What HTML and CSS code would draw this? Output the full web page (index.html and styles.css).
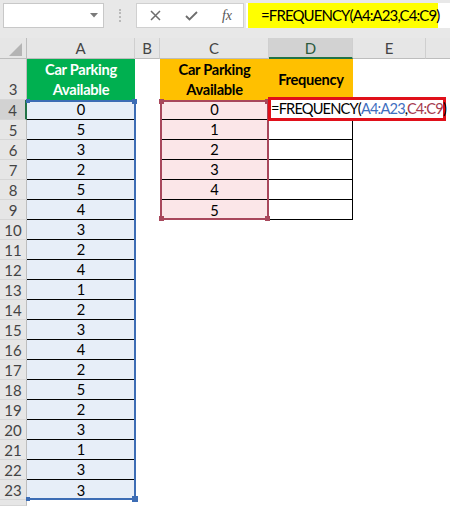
FILE: index.html
```html
<!DOCTYPE html>
<html>
<head>
<meta charset="utf-8">
<link rel="stylesheet" href="styles.css">
</head>
<body>
<div class="toolbar">
  <div class="namebox"><svg width="8" height="5" viewBox="0 0 8 5"><polygon points="0,0 8,0 4,4.5" fill="#7a7a7a"/></svg></div>
  <div class="grip"><i></i></div>
  <div class="fbtns">
    <span><svg width="11" height="11" viewBox="0 0 11 11"><path d="M1 1 L10 10 M10 1 L1 10" stroke="#6d6d6d" stroke-width="1.5" fill="none"/></svg></span>
    <span><svg width="13" height="10" viewBox="0 0 13 10"><polyline points="1,5 4.5,8.5 12,1" stroke="#6d6d6d" stroke-width="1.8" fill="none"/></svg></span>
    <span class="fx">fx</span>
  </div>
  <div class="fbar"><div class="hl">=FREQUENCY(A4:A23,C4:C9)</div></div>
</div>

<div class="sheet">
  <div class="corner"><svg width="14" height="14" viewBox="0 0 14 14"><polygon points="13,0 13,13 0,13" fill="#b4b4b4"/></svg></div>
  <div class="ch">A</div>
  <div class="ch">B</div>
  <div class="ch">C</div>
  <div class="ch sel">D</div>
  <div class="ch">E</div>
  <div class="ch last"></div>

  <div class="rh tall">3</div>
  <div class="c head green ca3">Car Parking<br>Available</div>
  <div class="c head gold cc3">Car Parking<br>Available</div>
  <div class="c head gold cd3">Frequency</div>

  <div class="rh sel">4</div><div class="c ca">0</div><div class="c cc">0</div><div class="c cd"></div>
  <div class="rh">5</div><div class="c ca">5</div><div class="c cc">1</div><div class="c cd"></div>
  <div class="rh">6</div><div class="c ca">3</div><div class="c cc">2</div><div class="c cd"></div>
  <div class="rh">7</div><div class="c ca">2</div><div class="c cc">3</div><div class="c cd"></div>
  <div class="rh">8</div><div class="c ca">5</div><div class="c cc">4</div><div class="c cd"></div>
  <div class="rh">9</div><div class="c ca">4</div><div class="c cc end">5</div><div class="c cd"></div>
  <div class="rh">10</div><div class="c ca">3</div>
  <div class="rh">11</div><div class="c ca">2</div>
  <div class="rh">12</div><div class="c ca">4</div>
  <div class="rh">13</div><div class="c ca">1</div>
  <div class="rh">14</div><div class="c ca">2</div>
  <div class="rh">15</div><div class="c ca">3</div>
  <div class="rh">16</div><div class="c ca">4</div>
  <div class="rh">17</div><div class="c ca">2</div>
  <div class="rh">18</div><div class="c ca">5</div>
  <div class="rh">19</div><div class="c ca">2</div>
  <div class="rh">20</div><div class="c ca">3</div>
  <div class="rh">21</div><div class="c ca">1</div>
  <div class="rh">22</div><div class="c ca">3</div>
  <div class="rh">23</div><div class="c ca end">3</div>
  <div class="rh"></div>

  <div class="range-a">
    <span class="h tl"></span><span class="h tr"></span><span class="h bl"></span><span class="h br"></span>
  </div>
  <div class="range-c">
    <span class="h tl"></span><span class="h tr"></span><span class="h bl"></span><span class="h br"></span>
  </div>
  <div class="editor">=FREQUENCY(<span class="ref-a">A4:A23</span>,<span class="ref-c">C4:C9</span>)</div>
</div>
</body>
</html>
```

FILE: styles.css
```css
* { box-sizing: border-box; }
html, body { margin: 0; padding: 0; }
body {
  width: 450px;
  height: 506px;
  overflow: hidden;
  background: #fff;
  font-family: Lato, "Liberation Sans", sans-serif;
  font-size: 14.67px;
  color: #000;
}

/* formula toolbar */
.toolbar {
  height: 38px;
  background: #e8e8e8;
  display: flex;
  align-items: flex-start;
  padding-top: 3px;
}
.namebox {
  margin-left: 3px;
  width: 101px;
  height: 25px;
  background: #fff;
  border: 1px solid #c8c8c8;
  display: flex;
  align-items: center;
  justify-content: flex-end;
  padding-right: 5px;
}
.grip {
  width: 32px;
  height: 25px;
  display: flex;
  align-items: center;
  justify-content: center;
}
.grip i {
  display: block;
  height: 13px;
  border-left: 2px dotted #b9b9b9;
}
.fbtns {
  width: 108px;
  height: 25px;
  background: #fff;
  border: 1px solid #d0d0d0;
  display: grid;
  grid-template-columns: 36px 36px 36px;
}
.fbtns span {
  display: flex;
  align-items: center;
  justify-content: center;
}
.fx {
  font-family: "Liberation Serif", serif;
  font-style: italic;
  font-size: 14px;
  color: #555;
}
.fbar {
  flex: 1;
  margin-left: 2px;
  height: 25px;
  background: #fff;
}
.hl {
  width: 190px;
  height: 25px;
  margin-left: 2px;
  background: #ffff00;
  padding-left: 13px;
  line-height: 25px;
  font-size: 15px;
  letter-spacing: -0.9px;
  white-space: nowrap;
}

/* sheet */
.sheet {
  position: relative;
  display: grid;
  grid-template-columns: 27px 108px 25px 109px 84px 73px 1fr;
  grid-template-rows: 21px 41px repeat(20, 20px) 6px;
}
.corner {
  grid-column: 1;
  background: #e6e6e6;
  border-right: 1px solid #bdbdbd;
  border-bottom: 1px solid #bdbdbd;
  display: flex;
  justify-content: flex-end;
  align-items: flex-end;
  padding: 0 3px 1px 0;
}
.ch {
  background: #e6e6e6;
  border-right: 1px solid #cfcfcf;
  border-bottom: 1px solid #bdbdbd;
  display: flex;
  align-items: center;
  justify-content: center;
  color: #444;
  font-size: 15px;
}
.ch.last { border-right: none; }
.ch.sel {
  background: #d2d2d2;
  border-bottom: 2px solid #217346;
  color: #2b5a3c;
}
.rh {
  grid-column: 1;
  background: #e6e6e6;
  border-right: 1px solid #bdbdbd;
  border-bottom: 1px solid #d6d6d6;
  display: flex;
  align-items: center;
  justify-content: center;
  color: #444;
  font-size: 15px;
}
.rh.tall { align-items: flex-end; padding-bottom: 1px; }
.rh.sel {
  background: #d2d2d2;
  border-right: 2px solid #217346;
}

.c {
  display: flex;
  align-items: center;
  justify-content: center;
}
.ca3, .ca { grid-column: 2; }
.cc3, .cc { grid-column: 4; }
.cd3, .cd { grid-column: 5; }
.ca { background: #e7eef8; border-bottom: 1px solid #000; }
.cc { background: #fbe6e8; border-bottom: 1px solid #000; }
.cd { border-bottom: 1px solid #000; border-right: 1px solid #000; }
.ca.end, .cc.end { border-bottom: none; }
.head {
  flex-direction: column;
  font-weight: bold;
  line-height: 20px;
  text-align: center;
  letter-spacing: -0.3px;
}
.green { background: #00b050; color: #fff; }
.gold { background: #ffc000; }

/* range highlights (overlays) */
.range-a, .range-c, .editor { position: absolute; }
.range-a {
  grid-row: 3 / 23;
  grid-column: 2 / 3;
  top: 0; bottom: 0; left: 0; right: -1px;
  border: 2px solid #3d6db5;
  border-left: none;
}
.range-c {
  grid-row: 3 / 9;
  grid-column: 4 / 5;
  top: 0; bottom: 0; left: 0; right: 0;
  border: 2px solid #a8485c;
}
.h {
  position: absolute;
  width: 5px;
  height: 5px;
}
.range-a .h { background: #3d6db5; }
.range-c .h { background: #a8485c; }
.range-a .tl { left: -1px; top: -3px; width: 4px; height: 4px; }
.range-a .bl { left: -1px; bottom: -3px; width: 4px; height: 4px; }
.range-a .tr { right: -3px; top: -3px; }
.range-a .br { right: -4px; bottom: -4px; width: 6px; height: 6px; }
.range-c .tl { left: -3px; top: -3px; }
.range-c .tr { right: -3px; top: -3px; }
.range-c .bl { left: -3px; bottom: -3px; }
.range-c .br { right: -3px; bottom: -3px; }

.editor {
  grid-row: 3 / 4;
  grid-column: 5 / 8;
  top: -3px; bottom: -1px; left: -1px; right: 4px;
  border: 3px solid #e0101a;
  background: #fff;
  white-space: nowrap;
  line-height: 18px;
  letter-spacing: -0.85px;
  z-index: 2;
}
.ref-a { color: #3f6fbf; }
.ref-c { color: #a63a4e; }
```
